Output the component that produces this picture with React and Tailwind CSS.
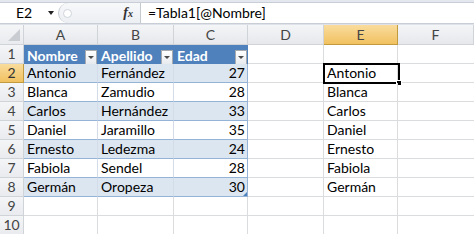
import React from "react";

const cols = ["A", "B", "C", "D", "E", "F"];
const widths = ["w-[74px]", "w-[76px]", "w-[74px]", "w-[76px]", "w-[74px]", "w-[76px]"];

const people = [
  ["Antonio", "Fernández", 27],
  ["Blanca", "Zamudio", 28],
  ["Carlos", "Hernández", 33],
  ["Daniel", "Jaramillo", 35],
  ["Ernesto", "Ledezma", 24],
  ["Fabiola", "Sendel", 28],
  ["Germán", "Oropeza", 30],
];

const FilterButton = () => (
  <div className="ml-auto mr-[1px] mt-[2px] flex h-[15px] w-[12px] items-center justify-center border border-[#a7abb0] bg-gradient-to-b from-white to-[#e7eaee]">
    <div className="h-0 w-0 border-x-[3px] border-t-[3px] border-x-transparent border-t-[#4a4a4a]" />
  </div>
);

const RowHeader = ({ n, active }) => (
  <div
    className={`flex w-[24px] shrink-0 items-center justify-center border-r border-b ${
      active
        ? "border-[#c29b3e] bg-gradient-to-b from-[#f9dc9c] to-[#f1c15f] text-[#333]"
        : "border-[#d0d3d8] bg-gradient-to-b from-[#f4f5f7] to-[#e9ebee] text-[#444]"
    }`}
  >
    {n}
  </div>
);

export default function App() {
  return (
    <div className="h-[234px] w-[474px] overflow-hidden bg-white text-[14px] leading-none text-black" style={{ fontFamily: "Lato, 'Liberation Sans', sans-serif" }}>
      {/* formula bar */}
      <div className="flex h-[25px] flex-col bg-white">
        <div className="h-[3px] border-b border-[#c9ced6] bg-[#e4e8ee]" />
        <div className="flex flex-1 items-center">
          <div className="flex h-full w-[58px] items-center pl-[16px]">
            <span>E2</span>
            <div className="ml-auto mr-[4px] h-0 w-0 border-x-[3px] border-t-[4px] border-x-transparent border-t-[#222]" />
          </div>
          <div className="flex h-full w-[82px] items-center rounded-l-full border-l border-[#c5cad1] bg-gradient-to-b from-[#f7f8fa] to-[#eceff3] pl-[4px]">
            <div className="h-[9px] w-[9px] rounded-full border border-[#cfd3d9] bg-white" />
            <span className="ml-auto mr-[7px] italic text-[#333]" style={{ fontFamily: "'Liberation Serif', serif", fontWeight: 700, fontSize: 14 }}>
              f<span className="text-[10px]">x</span>
            </span>
          </div>
          <div className="flex h-full flex-1 items-center border-l border-[#c5cad1] pl-[7px]">
            =Tabla1[@Nombre]
          </div>
        </div>
        <div className="h-[2px] border-t border-[#c9ced6] bg-[#dfe3e9]" />
      </div>

      {/* column header row */}
      <div className="flex h-[20px] text-[#444]">
        <div className="relative w-[24px] shrink-0 border-r border-b border-[#d0d3d8] bg-gradient-to-b from-[#f4f5f7] to-[#e9ebee]">
          <div className="absolute bottom-[3px] right-[3px] h-0 w-0 border-l-[12px] border-t-[12px] border-l-transparent border-t-transparent border-b-0 border-r-0" style={{ borderBottom: "12px solid #c9ccd1", borderLeft: "12px solid transparent", borderTop: 0 }} />
        </div>
        {cols.map((c, i) => (
          <div
            key={c}
            className={`flex ${widths[i]} shrink-0 items-center justify-center border-r border-b ${
              c === "E"
                ? "border-[#c29b3e] bg-gradient-to-b from-[#f9dc9c] to-[#f1c15f]"
                : "border-[#d0d3d8] bg-gradient-to-b from-[#f4f5f7] to-[#e6e8ec]"
            }`}
          >
            {c}
          </div>
        ))}
      </div>

      {/* row 1: table header */}
      <div className="flex h-[19px]">
        <RowHeader n={1} />
        {["Nombre", "Apellido", "Edad"].map((h, i) => (
          <div key={h} className={`flex ${widths[i]} shrink-0 items-start border-b border-[#4f81bd] bg-[#4f81bd] pl-[3px] pt-[3px] font-bold text-white`}>
            <span className="mt-[1px]">{h}</span>
            <FilterButton />
          </div>
        ))}
        <div className="w-[76px] shrink-0 border-r border-b border-[#dadcdd]" />
        <div className="w-[74px] shrink-0 border-r border-b border-[#dadcdd]" />
        <div className="w-[76px] shrink-0 border-b border-[#dadcdd]" />
      </div>

      {/* data rows */}
      {people.map((p, r) => {
        const band = r % 2 === 0 ? "bg-[#dce6f1]" : "bg-white";
        const last = r === people.length - 1;
        return (
          <div key={p[0]} className="flex h-[19px]">
            <RowHeader n={r + 2} active={r === 0} />
            <div className={`flex w-[74px] shrink-0 items-center border-r border-b border-r-[#d3dce8] border-b-[#95b3d7] pl-[3px] ${band}`}>{p[0]}</div>
            <div className={`flex w-[76px] shrink-0 items-center border-r border-b border-r-[#d3dce8] border-b-[#95b3d7] pl-[3px] ${band}`}>{p[1]}</div>
            <div className={`relative flex w-[74px] shrink-0 items-center justify-end border-r border-b border-r-[#95b3d7] border-b-[#95b3d7] pr-[2px] ${band}`}>
              {p[2]}
              {last && (
                <div className="absolute bottom-0 right-0" style={{ width: 0, height: 0, borderBottom: "4px solid #4f81bd", borderLeft: "4px solid transparent" }} />
              )}
            </div>
            <div className="w-[76px] shrink-0 border-r border-b border-[#dadcdd]" />
            <div className="relative flex w-[74px] shrink-0 items-center border-r border-b border-[#dadcdd] pl-[3px]">
              {p[0]}
              {r === 0 && (
                <div className="absolute -left-[1px] -top-[1px] h-[21px] w-[77px] border-2 border-black">
                  <div className="absolute -bottom-[4px] -right-[4px] h-[6px] w-[6px] border border-white bg-black" />
                </div>
              )}
            </div>
            <div className="w-[76px] shrink-0 border-b border-[#dadcdd]" />
          </div>
        );
      })}

      {/* empty rows */}
      {[9, 10].map((n) => (
        <div key={n} className="flex h-[19px]">
          <RowHeader n={n} />
          {widths.map((w, i) => (
            <div key={i} className={`${w} shrink-0 border-b border-[#dadcdd] ${i < 5 ? "border-r" : ""}`} />
          ))}
        </div>
      ))}
    </div>
  );
}
